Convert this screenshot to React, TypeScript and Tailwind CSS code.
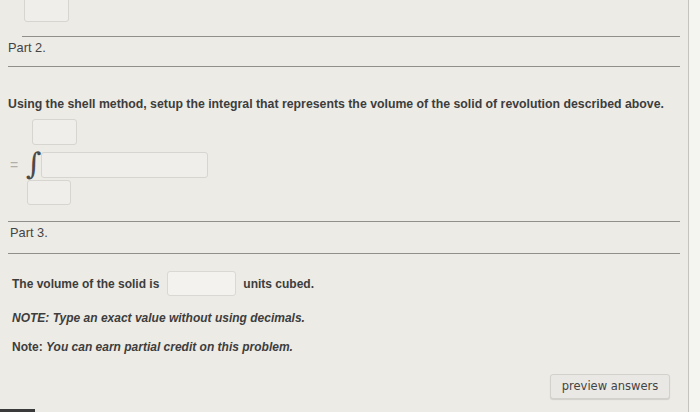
export default function App() {
  const box = "border border-[#d6d5d0] rounded-[3px] bg-[#efeeea]";
  return (
    <div
      className="relative w-[700px] h-[412px] bg-[#ecebe6] flex overflow-hidden text-[#3b3b3b]"
      style={{ fontFamily: '"Liberation Sans", Arial, sans-serif' }}
    >
      <div className="w-[689px] shrink-0 border-r border-[#c4c3be] flex flex-col">
        <div className={`ml-[24px] -mt-[6px] w-[45px] h-[28px] ${box}`} />
        <div className="mt-[14px] ml-[22px] mr-[8px] h-px bg-[#8f8f8b]" />
        <div className="mt-[4px] ml-[8px] text-[12.8px] leading-[14px] text-[#444]">Part 2.</div>
        <div className="mt-[11px] ml-[8px] mr-[8px] h-px bg-[#8f8f8b]" />

        <div className="mt-[30px] ml-[8px] text-[12.3px] leading-[14px] font-bold text-[#3d3d3d] whitespace-nowrap">
          Using the shell method, setup the integral that represents the volume of the solid of revolution described above.
        </div>

        <div className="mt-[8px] flex flex-col">
          <div className={`ml-[32px] w-[45px] h-[26px] ${box}`} />
          <div className="mt-[7px] flex items-center h-[26px]">
            <span className="ml-[10px] w-[16px] text-[14px] text-[#b0afaa] leading-none">=</span>
            <span
              className="w-[15px] text-[30px] leading-none text-[#4a4a4a] -mt-[2px]"
              style={{ fontFamily: '"DejaVu Serif", serif' }}
            >
              ∫
            </span>
            <div className={`w-[167px] h-[26px] ${box}`} />
          </div>
          <div className={`mt-[2px] ml-[27px] w-[44px] h-[25px] ${box}`} />
        </div>

        <div className="mt-[16px] ml-[8px] mr-[8px] h-px bg-[#8f8f8b]" />
        <div className="mt-[4px] ml-[10px] text-[12.8px] leading-[14px] text-[#444]">Part 3.</div>
        <div className="mt-[13px] ml-[8px] mr-[8px] h-px bg-[#8f8f8b]" />

        <div className="mt-[17px] ml-[12px] flex items-center text-[12px] font-bold text-[#3d3d3d]">
          <span>The volume of the solid is</span>
          <div className="ml-[8px] w-[69px] h-[25px] border border-[#d9d8d3] rounded-[3px] bg-[#f3f2ee]" />
          <span className="ml-[7px]">units cubed.</span>
        </div>

        <div className="mt-[15px] ml-[12px] text-[12px] leading-[14px] font-bold italic text-[#3d3d3d]">
          NOTE: Type an exact value without using decimals.
        </div>
        <div className="mt-[15px] ml-[12px] text-[12px] leading-[14px] font-bold text-[#3d3d3d]">
          Note: <span className="italic">You can earn partial credit on this problem.</span>
        </div>

        <div className="mt-[19px] mr-[18px] self-end">
          <button
            className="w-[120px] h-[25px] rounded-[3px] border border-[#d2d1cc] bg-[#e9e8e4] text-[11.5px] text-[#444] shadow-[0_1px_1px_rgba(0,0,0,0.12)]"
            style={{ fontFamily: '"DejaVu Sans", sans-serif' }}
          >
            preview answers
          </button>
        </div>
      </div>
      <div className="flex-1 bg-[#f4f4f1]" />
      <div className="absolute left-0 bottom-0 w-[35px] h-[3px] bg-[#3a3a3a]" />
    </div>
  );
}
